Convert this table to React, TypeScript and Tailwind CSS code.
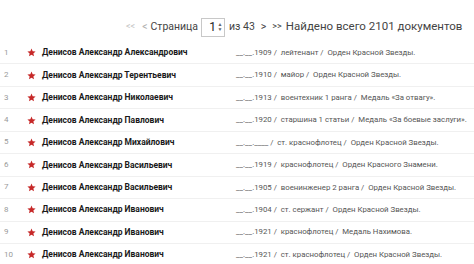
const rows = [
  {name: 'Денисов Александр Александрович', info: '__.__.1909 /  лейтенант /  Орден Красной Звезды.'},
  {name: 'Денисов Александр Терентьевич', info: '__.__.1910 /  майор /  Орден Красной Звезды.'},
  {name: 'Денисов Александр Николаевич', info: '__.__.1913 /  воентехник 1 ранга /  Медаль «За отвагу».'},
  {name: 'Денисов Александр Павлович', info: '__.__.1920 /  старшина 1 статьи /  Медаль «За боевые заслуги».'},
  {name: 'Денисов Александр Михайлович', info: '__.__.____ /  ст. краснофлотец /  Орден Красной Звезды.'},
  {name: 'Денисов Александр Васильевич', info: '__.__.1919 /  краснофлотец /  Орден Красного Знамени.'},
  {name: 'Денисов Александр Васильевич', info: '__.__.1905 /  военинженер 2 ранга /  Орден Красной Звезды.'},
  {name: 'Денисов Александр Иванович', info: '__.__.1904 /  ст. сержант /  Орден Красной Звезды.'},
  {name: 'Денисов Александр Иванович', info: '__.__.1921 /  краснофлотец /  Медаль Нахимова.'},
  {name: 'Денисов Александр Иванович', info: '__.__.1921 /  ст. краснофлотец /  Орден Красной Звезды.'},
  {name: 'Денисов Александр Николаевич', info: '__.__.1918 /  красноармеец /  Медаль «За боевые заслуги».'},
]

function Star() {
  return (
    <svg width="9" height="9" viewBox="0 0 24 24" className="shrink-0">
      <path
        d="M12 1.5l3.1 7.2 7.8.6-5.9 5.1 1.8 7.6L12 17.9l-6.8 4.1 1.8-7.6-5.9-5.1 7.8-.6z"
        fill="#c62828"
      />
    </svg>
  )
}

export default function App() {
  return (
    <div className="w-[474px] h-[264px] overflow-hidden bg-white font-['Roboto',sans-serif]">
      <div className="h-[42px] flex items-center whitespace-nowrap pl-[126px] pt-[12px] text-[10.5px] text-[#444]">
        <span className="text-[#c4c4c4] text-[9px] mr-[7px]">&lt;&lt;</span>
        <span className="text-[#b0b0b0] mr-[3px]">&lt;</span>
        <span>Страница</span>
        <div className="ml-[3px] w-[24px] h-[19px] shrink-0 border border-[#c8c8c8] flex items-center justify-end pr-[1px]">
          <span className="text-[12px] text-[#222] mr-[1px]">1</span>
          <div className="flex flex-col items-center justify-center w-[6px] leading-none text-[5px] text-[#666]">
            <span>▲</span>
            <span>▼</span>
          </div>
        </div>
        <span className="ml-[4px]">из 43</span>
        <span className="ml-[6px]">&gt;</span>
        <span className="ml-[6px] text-[9px]">&gt;&gt;</span>
        <span className="ml-[4px] text-[11.5px]">Найдено всего 2101 документов</span>
      </div>
      <div>
        {rows.map((r, i) => (
          <div
            key={i}
            className="h-[22.44px] flex items-center border-b border-[#f0f0f0] text-[8px] whitespace-pre"
          >
            <span className="w-[27px] shrink-0 pl-[4px] text-[#9a9a9a]">{i + 1}</span>
            <Star />
            <span className="ml-[6px] w-[194px] shrink-0 font-bold text-[8.5px] text-[#1a1a1a]">{r.name}</span>
            <span className="text-[#555] text-[7.8px]">{r.info}</span>
          </div>
        ))}
      </div>
    </div>
  )
}
